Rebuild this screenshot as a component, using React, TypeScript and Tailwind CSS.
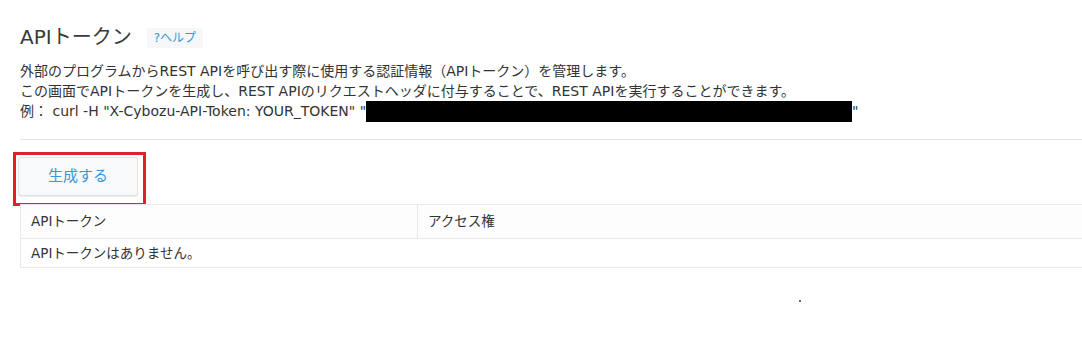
export default function App() {
  return (
    <div className="w-[1082px] h-[348px] bg-white overflow-hidden text-[#333] font-['DejaVu_Sans','Noto_Sans_CJK_JP',sans-serif]">
      <div className="pl-5 pt-[22px]">
        <div className="flex items-center">
          <h1 className="text-[20px] leading-[30px] font-normal text-[#3a3a3a]">APIトークン</h1>
          <a className="ml-[15px] mt-[2px] bg-[#f5f7f8] px-[7px] leading-[20px] text-[12px] text-[#3498db] rounded-[2px]">?ヘルプ</a>
        </div>
        <div className="mt-[10px] text-[14px] leading-[19.5px]">
          <p>外部のプログラムからREST APIを呼び出す際に使用する認証情報（APIトークン）を管理します。</p>
          <p>この画面でAPIトークンを生成し、REST APIのリクエストヘッダに付与することで、REST APIを実行することができます。</p>
          <p className="flex items-center">
            <span>例： curl -H "X-Cybozu-API-Token: YOUR_TOKEN" "</span>
            <span className="inline-block w-[486px] h-[21px] bg-black"></span>
            <span>"</span>
          </p>
        </div>
        <div className="mt-[17px] border-t border-[#e3e3e3]"></div>
        <div className="mt-[12px] -ml-[7px] w-[133px] h-[54px] border-[3px] border-[#e0202a] p-[2px]">
          <button className="w-[120px] h-[39px] bg-[#f7f9fa] border border-[#dfe3e5] rounded-[3px] text-[15px] text-[#3498db] shadow-[0_1px_1px_rgba(0,0,0,0.08)]">
            生成する
          </button>
        </div>
        <table className="-mt-[2px] w-[1070px] border-collapse text-[13.5px]">
          <thead>
            <tr className="h-[34px]">
              <th className="w-[397px] border border-[#e8e8e8] text-left font-normal pl-[10px] bg-[#fdfdfd]">APIトークン</th>
              <th className="border border-[#e8e8e8] text-left font-normal pl-[10px] bg-[#fdfdfd]">アクセス権</th>
            </tr>
          </thead>
          <tbody>
            <tr className="h-[29px]">
              <td colSpan={2} className="border border-[#e8e8e8] pl-[10px]">APIトークンはありません。</td>
            </tr>
          </tbody>
        </table>
      </div>
      <div className="ml-[799px] mt-[32px] w-[2px] h-[2px] bg-[#666]"></div>
    </div>
  );
}
